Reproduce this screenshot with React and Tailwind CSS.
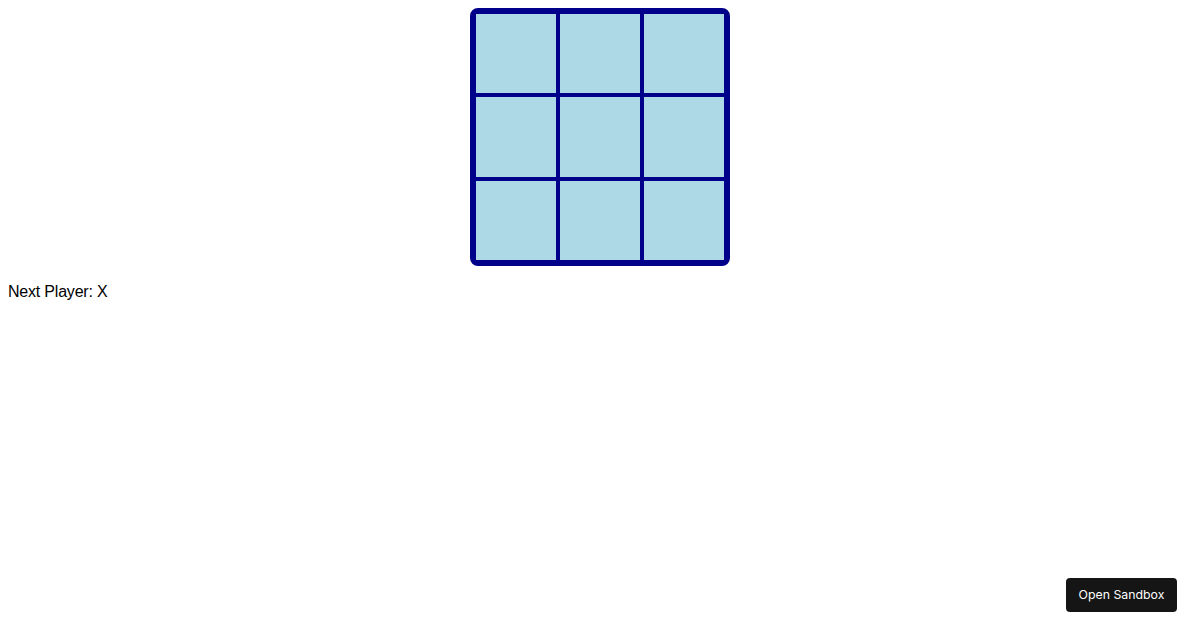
export default function App() {
  const cells = Array.from({ length: 9 });
  return (
    <div className="min-h-screen bg-white p-2" style={{ fontFamily: '"Liberation Sans", Arial, sans-serif' }}>
      <div className="mx-auto w-[260px] rounded-[8px] border-4 border-[#00008b] bg-[#00008b]">
        <div className="grid h-[250px] grid-cols-3 grid-rows-3">
          {cells.map((_, i) => (
            <div key={i} className="border-2 border-[#00008b] bg-[#add8e6]" />
          ))}
        </div>
      </div>
      <div className="mt-[14px] text-base leading-6 tracking-[-0.2px] text-black">Next Player: X</div>
      <button className="fixed bottom-[18px] right-[23px] h-[34px] w-[111px] rounded-[4px] bg-[#151515] font-['Inter',sans-serif] text-[12.3px] text-white">
        Open Sandbox
      </button>
    </div>
  );
}
